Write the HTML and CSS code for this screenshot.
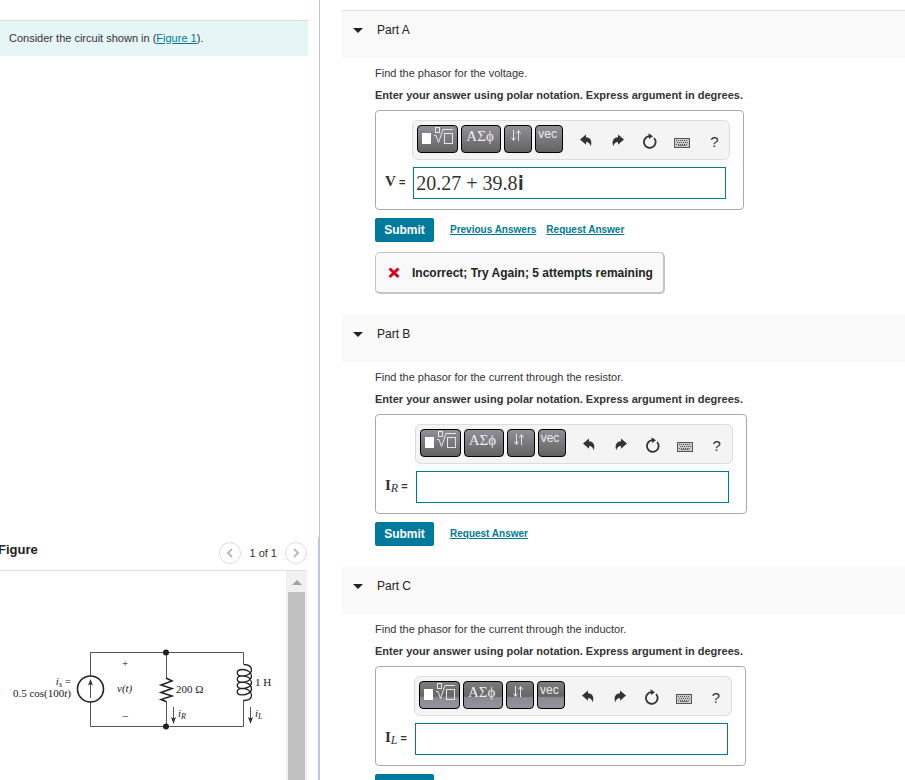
FILE: index.html
```html
<!DOCTYPE html>
<html lang="en">
<head>
  <meta charset="UTF-8">
  <title>Circuit phasors</title>
  <meta name="viewport" content="width=device-width, initial-scale=1">
  <link rel="stylesheet" href="styles.css">
</head>
<body>
  <svg class="sprite" aria-hidden="true">
    <symbol id="root" viewBox="0 0 39 26">
      <rect x="4" y="7" width="9" height="11" fill="#fff"/>
      <g fill="none" stroke="#e6e6e6">
        <rect x="17.5" y="1.5" width="4" height="5"/>
        <path d="M16 9.5h2l2.5 7L25 3.500h10"/>
        <rect x="26.500" y="7.500" width="8" height="10"/>
      </g>
    </symbol>
    <symbol id="arrows" viewBox="0 0 26 26">
      <path d="M8.500 4v10M6.500 11.500l2 3 2-3M13.500 15V5M11.500 7.500l2-3 2 3" fill="none" stroke="#e6e6e6"/>
    </symbol>
    <symbol id="undo" viewBox="0 0 16 16">
      <path d="M2 6.500L8 1.500v2.800c4.500.2 6.500 4 4.700 9-.6-3-2-4.200-4.700-4.400v2.900z" fill="#333"/>
    </symbol>
    <symbol id="redo" viewBox="0 0 16 16">
      <path d="M14 6.500L8 1.500v2.800c-4.500.2-6.500 4-4.700 9 .6-3 2-4.200 4.700-4.400v2.900z" fill="#333"/>
    </symbol>
    <symbol id="reset" viewBox="0 0 16 16">
      <path d="M12 5A5.800 5.800 0 1 1 7.500 3.200" fill="none" stroke="#333" stroke-width="1.800"/>
      <path d="M6.500 .3l4.500 2.900L7 6z" fill="#333"/>
    </symbol>
    <symbol id="keyboard" viewBox="0 0 18 16">
      <rect x="1.500" y="5.500" width="15" height="9" fill="#ccc" stroke="#555"/>
      <path d="M3 7.500h12M4 9.500h11M3 11.500h12" stroke="#555" stroke-dasharray="1 1"/>
      <path d="M5 12.500h8" stroke="#777"/>
    </symbol>
  </svg>

  <div class="page">
    <aside class="side">
      <p class="intro">Consider the circuit shown in (<a href="#figure">Figure 1</a>).</p>
      <section class="figure" id="figure">
        <header class="figure-head">
          <h2>Figure</h2>
          <div class="pager">
            <button aria-label="Previous figure"><svg viewBox="0 0 10 12"><path d="M7 2L3 6l4 4"/></svg></button>
            <span>1 of 1</span>
            <button aria-label="Next figure"><svg viewBox="0 0 10 12"><path d="M3 2l4 4-4 4"/></svg></button>
          </div>
        </header>
        <div class="figure-view">
          <svg class="circuit" viewBox="0 0 286 209" role="img" aria-label="Circuit with current source, resistor and inductor">
            <!-- wires -->
            <g fill="none" stroke="#555">
              <path d="M90.500 105V81.500H243.500V93M90.500 131v24.500H243.500V129M166.500 81v26M166.500 130v25"/>
            </g>
            <circle cx="166" cy="81.500" r="3"/>
            <circle cx="166" cy="155.500" r="3"/>
            <!-- source -->
            <circle cx="90.500" cy="118" r="13" fill="none" stroke="#222" stroke-width="1.600"/>
            <path d="M90.500 127v-16" stroke="#555"/>
            <path d="M88 114.500l2.500-6.500 2.500 6.500-2.500-1.500z" fill="#333"/>
            <!-- resistor -->
            <path d="M166 107l6 3-11 4 11 3.500-11 4 11 3.500-11 3.500 5 2" fill="none" stroke="#222" stroke-width="1.500"/>
            <!-- inductor -->
            <path d="M243.500 93.500C249 93.500 251.500 96 251.500 99c0 4-5.500 6-9 6c-7 0-7-6.500 0-6.500c4.500 0 9 2.500 9 6.800c0 4-5.500 6-9 6c-7 0-7-6.500 0-6.500c4.500 0 9 2.500 9 6.800c0 4-5.500 6-9 6c-7 0-7-6.500 0-6.500c4.500 0 9 2.500 9 6.800c0 4-5.500 6-9 6c-7 0-7-6.500 0-6.500c4.500 0 9 2.500 9 6.800C251.500 127 249 129.500 243.500 129.500" fill="none" stroke="#222" stroke-width="1.300"/>
            <!-- branch currents -->
            <path d="M173.500 136v14M250.500 136v14" stroke="#555"/>
            <path d="M171 146l2.500 7 2.500-7-2.500 1.500zM248 146l2.500 7 2.500-7-2.500 1.500z" fill="#333"/>
            <text x="71" y="114" text-anchor="end"><tspan class="it">i</tspan><tspan class="it sub" dy="2">s</tspan><tspan dy="-2"> =</tspan></text>
            <text x="71" y="126" text-anchor="end">0.5 cos(100<tspan class="it">t</tspan>)</text>
            <text x="125" y="96" text-anchor="middle">+</text>
            <text x="117" y="121" class="it">v(t)</text>
            <text x="125" y="149" text-anchor="middle">−</text>
            <text x="176" y="122">200 Ω</text>
            <text x="255" y="115">1 H</text>
            <text x="178" y="146" class="it">i<tspan class="sub" dy="2">R</tspan></text>
            <text x="255" y="146" class="it">i<tspan class="sub" dy="2">L</tspan></text>
          </svg>
          <div class="scrollbar"><span class="scroll-up"></span><span class="scroll-thumb"></span></div>
        </div>
      </section>
    </aside>

    <main class="parts">
      <section class="part">
        <h3 class="part-head">Part A</h3>
        <div class="part-body">
          <p>Find the phasor for the voltage.</p>
          <p class="hint">Enter your answer using polar notation. Express argument in degrees.</p>
          <div class="answer">
            <div class="toolbar">
              <button class="key key-wide" aria-label="Templates"><svg viewBox="0 0 39 26"><use href="#root"/></svg></button>
              <button class="key key-greek">ΑΣϕ</button>
              <button class="key" aria-label="Arrows"><svg viewBox="0 0 26 26"><use href="#arrows"/></svg></button>
              <button class="key key-vec">vec</button>
              <div class="tools">
                <button aria-label="Undo"><svg viewBox="0 0 16 16"><use href="#undo"/></svg></button>
                <button aria-label="Redo"><svg viewBox="0 0 16 16"><use href="#redo"/></svg></button>
                <button aria-label="Reset"><svg viewBox="0 0 16 16"><use href="#reset"/></svg></button>
                <button aria-label="Keyboard shortcuts"><svg class="kbd" viewBox="0 0 18 16"><use href="#keyboard"/></svg></button>
                <button>?</button>
              </div>
            </div>
            <label for="answer-a"><b>V</b> <span>=</span></label>
            <input id="answer-a" type="text" value="20.27 + 39.8𝐢">
          </div>
          <div class="actions">
            <button class="submit">Submit</button>
            <a href="#">Previous Answers</a>
            <a href="#">Request Answer</a>
          </div>
          <div class="feedback">
            <svg viewBox="0 0 12 12"><path d="M1.500 1.500l9 8.500M10.500 1.500l-9 8.500"/></svg>
            Incorrect; Try Again; 5 attempts remaining
          </div>
        </div>
      </section>

      <section class="part">
        <h3 class="part-head">Part B</h3>
        <div class="part-body">
          <p>Find the phasor for the current through the resistor.</p>
          <p class="hint">Enter your answer using polar notation. Express argument in degrees.</p>
          <div class="answer">
            <div class="toolbar">
              <button class="key key-wide" aria-label="Templates"><svg viewBox="0 0 39 26"><use href="#root"/></svg></button>
              <button class="key key-greek">ΑΣϕ</button>
              <button class="key" aria-label="Arrows"><svg viewBox="0 0 26 26"><use href="#arrows"/></svg></button>
              <button class="key key-vec">vec</button>
              <div class="tools">
                <button aria-label="Undo"><svg viewBox="0 0 16 16"><use href="#undo"/></svg></button>
                <button aria-label="Redo"><svg viewBox="0 0 16 16"><use href="#redo"/></svg></button>
                <button aria-label="Reset"><svg viewBox="0 0 16 16"><use href="#reset"/></svg></button>
                <button aria-label="Keyboard shortcuts"><svg class="kbd" viewBox="0 0 18 16"><use href="#keyboard"/></svg></button>
                <button>?</button>
              </div>
            </div>
            <label for="answer-b"><b>I</b><sub>R</sub> <span>=</span></label>
            <input id="answer-b" type="text">
          </div>
          <div class="actions">
            <button class="submit">Submit</button>
            <a href="#">Request Answer</a>
          </div>
        </div>
      </section>

      <section class="part">
        <h3 class="part-head">Part C</h3>
        <div class="part-body">
          <p>Find the phasor for the current through the inductor.</p>
          <p class="hint">Enter your answer using polar notation. Express argument in degrees.</p>
          <div class="answer">
            <div class="toolbar toolbar-split">
              <button class="key key-wide" aria-label="Templates"><svg viewBox="0 0 39 26"><use href="#root"/></svg></button>
              <button class="key key-greek">ΑΣϕ</button>
              <button class="key" aria-label="Arrows"><svg viewBox="0 0 26 26"><use href="#arrows"/></svg></button>
              <button class="key key-vec">vec</button>
              <div class="tools">
                <button aria-label="Undo"><svg viewBox="0 0 16 16"><use href="#undo"/></svg></button>
                <button aria-label="Redo"><svg viewBox="0 0 16 16"><use href="#redo"/></svg></button>
                <button aria-label="Reset"><svg viewBox="0 0 16 16"><use href="#reset"/></svg></button>
                <button aria-label="Keyboard shortcuts"><svg class="kbd" viewBox="0 0 18 16"><use href="#keyboard"/></svg></button>
                <button>?</button>
              </div>
            </div>
            <label for="answer-c"><b>I</b><sub>L</sub> <span>=</span></label>
            <input id="answer-c" type="text">
          </div>
          <div class="actions">
            <button class="submit">Submit</button>
            <a href="#">Request Answer</a>
          </div>
        </div>
      </section>
    </main>
  </div>
</body>
</html>
```
FILE: styles.css
```css
* {
  box-sizing: border-box;
}
body {
  margin: 0;
  background: #fff;
  color: #333;
  font: 11px/22px "Liberation Sans", Arial, sans-serif;
}
p, h2, h3 {
  margin: 0;
}
button {
  padding: 0;
  font-family: inherit;
  cursor: pointer;
}
a {
  color: #007a99;
}
.sprite {
  display: none;
}
.page {
  display: flex;
  height: 100vh;
  overflow: hidden;
}

/* left side */
.side {
  flex: none;
  width: 320px;
  display: flex;
  flex-direction: column;
  justify-content: space-between;
  border-right: 1px solid #bcc6dc;
}
.intro {
  margin: 20px 11px 0 0;
  padding: 6px 9px 7px;
  border-top: 1px solid #ddd;
  background: #e6f5f5;
}
.figure {
  padding-right: 11px;
  border-right: 1px solid #b9cbe0;
}
.figure-head {
  display: flex;
  justify-content: space-between;
  height: 34px;
  border-bottom: 1px solid #ddd;
}
.figure-head h2 {
  margin-left: -2px;
  font-size: 13px;
  line-height: 25px;
  color: #222;
}
.pager {
  display: flex;
  align-items: center;
  gap: 8px;
  padding-bottom: 2px;
}
.pager button {
  display: flex;
  align-items: center;
  justify-content: center;
  width: 22px;
  height: 22px;
  border: 1px solid #ddd;
  border-radius: 50%;
  background: #fff;
}
.pager svg {
  width: 10px;
  height: 12px;
  fill: none;
  stroke: #bbb;
  stroke-width: 2;
}
.figure-view {
  display: flex;
}
.circuit {
  flex: 1;
  min-width: 0;
  fill: #222;
  font: 11px "Liberation Serif", "Times New Roman", serif;
}
.it {
  font-style: italic;
}
.sub {
  font-size: 8px;
}
.scrollbar {
  display: flex;
  flex-direction: column;
  align-items: center;
  width: 21px;
  background: #f1f1f1;
}
.scroll-up {
  margin: 9px 0 7px;
  border: 5px solid transparent;
  border-top: 0;
  border-bottom-color: #a3a3a3;
}
.scroll-thumb {
  flex: 1;
  width: 17px;
  background: #c1c1c1;
}

/* questions */
.parts {
  flex: 1;
  min-width: 0;
  padding: 10px 0 0 22px;
  overflow: hidden;
}
.part-head {
  display: flex;
  align-items: center;
  gap: 14px;
  height: 47px;
  padding: 0 0 9px 11px;
  background: #f9f9f9;
  color: #222;
  font-size: 12px;
  font-weight: normal;
}
.part:first-child .part-head {
  height: 48px;
  border-top: 1px solid #ddd;
}
.part-head::before {
  content: '';
  border: 5px solid transparent;
  border-top-color: #222;
  border-bottom: 0;
}
.part-body {
  padding: 4px 0 21px 33px;
}
.hint {
  font-weight: bold;
}
.answer {
  display: grid;
  grid-template-columns: auto 318px;
  row-gap: 7px;
  width: fit-content;
  margin: 4px 0 8px;
  padding: 9px 13px 10px 9px;
  border: 1px solid #aaa;
  border-radius: 4px;
}
.toolbar {
  grid-column: 2;
  display: flex;
  gap: 3px;
  height: 40px;
  padding: 4px;
  border: 1px solid #ddd;
  border-radius: 6px;
  background: #f4f4f4;
}
.key {
  flex: none;
  display: flex;
  align-items: flex-start;
  justify-content: center;
  width: 28px;
  height: 28px;
  border: 1px solid #000;
  border-radius: 4px;
  background: linear-gradient(#918f98, #626262);
  color: #eee;
}
.toolbar-split .key {
  background: linear-gradient(#7c7c7e, #666 55%, #8b8993 60%, #94929b);
}
.key svg {
  width: 26px;
  height: 26px;
}
.key-wide {
  width: 41px;
}
.key-wide svg {
  width: 39px;
}
.key-greek {
  justify-content: flex-start;
  width: 40px;
  padding-left: 4px;
  font: 15px/20px "Liberation Serif", "Times New Roman", serif;
}
.key-vec {
  justify-content: flex-start;
  padding-left: 2px;
  font-size: 12px;
  line-height: 16px;
}
.tools {
  display: flex;
  margin-left: 4px;
}
.tools button {
  display: flex;
  align-items: center;
  justify-content: center;
  width: 32px;
  height: 32px;
  border: 0;
  background: none;
  color: #333;
  font-size: 15px;
}
.tools svg {
  width: 16px;
  height: 16px;
}
.tools .kbd {
  width: 18px;
}
.answer label {
  padding-right: 7px;
  line-height: 30px;
  white-space: nowrap;
}
.answer label b {
  font: bold 15px "Liberation Serif", "Times New Roman", serif;
}
.answer label sub {
  font: italic 12px "Liberation Serif", "Times New Roman", serif;
  vertical-align: -2px;
}
.answer label span {
  font-weight: bold;
}
.answer input {
  height: 32px;
  margin: 0 4px 0 1px;
  padding: 0 2px;
  border: 1px solid #007a99;
  background: #fff;
  color: #333;
  font: 20px "Liberation Serif", "DejaVu Serif", serif;
}
.actions {
  display: flex;
  align-items: center;
  gap: 10px;
}
.actions a {
  font-size: 10px;
  font-weight: bold;
}
.submit {
  width: 59px;
  height: 24px;
  margin-right: 6px;
  border: 0;
  border-radius: 2px;
  background: #007a9c;
  color: #fff;
  font-size: 12px;
  font-weight: bold;
}
.feedback {
  display: flex;
  align-items: center;
  gap: 12px;
  width: fit-content;
  height: 42px;
  margin-top: 10px;
  padding: 0 10px 0 12px;
  border: 1px solid #c4c4c4;
  border-right-width: 2px;
  border-bottom-width: 2px;
  border-radius: 5px;
  background: #f9f9f9;
  color: #222;
  font-size: 12px;
  font-weight: bold;
}
.feedback svg {
  width: 12px;
  height: 12px;
  stroke: #d9001f;
  stroke-width: 3;
}
```
